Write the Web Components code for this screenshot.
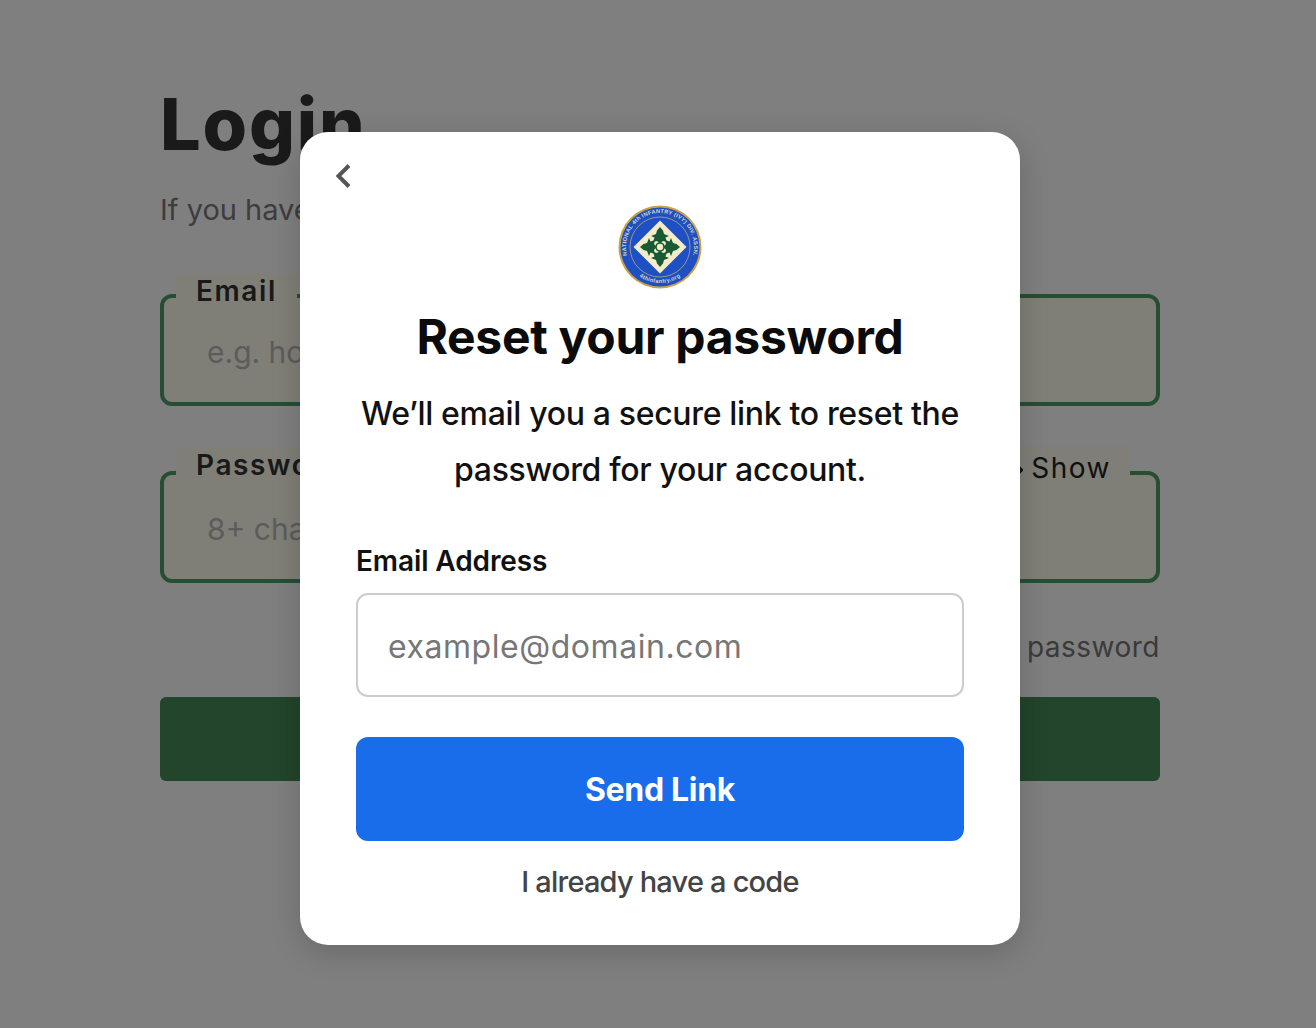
<!DOCTYPE html>
<html lang="en">
<head>
<meta charset="utf-8">
<title>Login</title>
<style>
  html, body { margin: 0; height: 100%; background: #fff; font-family: Inter, "Liberation Sans", sans-serif; overflow: hidden; }
</style>
</head>
<body>
<login-page>
  <text-field label="Email" placeholder="e.g. hooah" style="--label-top:-24px"></text-field>
  <text-field label="Password" placeholder="8+ characters" style="--label-top:-27px">
    <span slot="action"><svg width="30" height="22" viewBox="0 0 30 22" fill="none" stroke="#222" stroke-width="2.4" style="vertical-align:-3px;margin-right:8px"><path d="M2 11 C8 2 22 2 29 11 C22 20 8 20 2 11 Z"/><circle cx="15" cy="11" r="4.5"/></svg>Show</span>
  </text-field>
</login-page>
<modal-backdrop>
  <reset-card></reset-card>
</modal-backdrop>

<script>
// Campo do login com a legenda por cima da borda
class TextField extends HTMLElement {
  constructor() {
    super();
    this.attachShadow({mode: 'open'});
    this.shadowRoot.innerHTML = `
      <style>
        :host { display: block; position: relative; height: 112px; box-sizing: border-box;
                border: 4px solid #4e9a66; border-radius: 12px; background: #fefef0; }
        .label { position: absolute; left: 12px; top: var(--label-top, -24px); padding: 0 20px; height: 40px; min-width: 80px;
                 background: #fefef0; font-size: 28px; font-weight: 600; line-height: 34px; color: #333; letter-spacing: 1.6px; }
        .action { position: absolute; right: 26px; top: -29px; height: 45px; padding: 0 19px 0 20px; line-height: 44px;
                  background: #fefef0; font-size: 28px; color: #222; letter-spacing: 1.5px; white-space: nowrap; }
        .ph { padding: 35px 43px 0; font-size: 30px; line-height: 38px; color: #b8b8b8; white-space: nowrap; overflow: hidden; }
      </style>
      <div class="label"></div>
      <div class="ph"></div>
      <div class="action"><slot name="action"></slot></div>`;
  }
  connectedCallback() {
    this.shadowRoot.querySelector('.label').textContent = this.getAttribute('label');
    this.shadowRoot.querySelector('.ph').textContent = this.getAttribute('placeholder');
    if (!this.querySelector('[slot=action]')) this.shadowRoot.querySelector('.action').remove();
  }
}

class LoginPage extends HTMLElement {
  constructor() {
    super();
    this.attachShadow({mode: 'open'});
    this.shadowRoot.innerHTML = `
      <style>
        :host { display: block; padding: 82px 156px 0 160px; }
        h1 { margin: 0; font-size: 72px; line-height: 84px; font-weight: 800; color: #343434; letter-spacing: 1.8px; }
        p { margin: 24px 0 0; font-size: 29px; line-height: 40px; color: #7a7a7a; white-space: nowrap; }
        .fields { display: flex; flex-direction: column; gap: 65px; margin-top: 64px; }
        .forgot { margin-top: 45px; text-align: right; font-size: 28px; line-height: 38px; color: #757575; letter-spacing: .5px; }
        button { display: block; width: 100%; height: 84px; margin-top: 31px; border: 0; border-radius: 6px;
                 background: #458a57; color: #fff; font: 600 28px Inter, sans-serif; }
      </style>
      <h1>Login</h1>
      <p>If you have an account,</p>
      <div class="fields"><slot></slot></div>
      <div class="forgot">Forgot password</div>
      <button>Login</button>`;
  }
}

// Fundo escuro sobre a pagina, centraliza o card
class ModalBackdrop extends HTMLElement {
  constructor() {
    super();
    this.attachShadow({mode: 'open'});
    this.shadowRoot.innerHTML = `
      <style>
        :host { position: absolute; inset: 0; display: flex; justify-content: center; align-items: flex-start;
                padding: 132px 0 0 4px; box-sizing: border-box; background: rgba(0,0,0,.5); }
      </style>
      <slot></slot>`;
  }
}

class UnitBadge extends HTMLElement {
  constructor() {
    super();
    this.attachShadow({mode: 'open'});
    const leaf = `<path d="M0-3.5 L-3-6 L-7-5 L-5.5-9.5 L-9-11 L-4-13 L-3-16.5 L0-20 L3-16.5 L4-13 L9-11 L5.5-9.5 L7-5 L3-6 Z" fill="#175a34"/>`;
    this.shadowRoot.innerHTML = `
      <style>
        :host { display: block; width: 84px; height: 84px; }
        svg { display: block; }
        text { font: 700 5.6px "Liberation Sans", sans-serif; fill: #d8d8c0; letter-spacing: .3px; }
      </style>
      <svg width="84" height="84" viewBox="-42 -42 84 84">
        <defs>
          <path id="top" d="M-31.8 12 A34 34 0 1 1 31.8 12"/>
          <path id="bot" d="M-27 24 A36.5 36.5 0 0 0 27 24"/>
        </defs>
        <circle r="41.5" fill="#c9a24a"/>
        <circle r="39.5" fill="#1f4fc4"/>
        <circle r="30" fill="none" stroke="#c9b777" stroke-width=".7"/>
        <text><textPath href="#top" startOffset="50%" text-anchor="middle">NATIONAL 4th INFANTRY (IVY) DIV. ASSN.</textPath></text>
        <text><textPath href="#bot" startOffset="50%" text-anchor="middle">4thinfantry.org</textPath></text>
        <path d="M0-26.5 L26.5 0 L0 26.5 L-26.5 0 Z" fill="#f4ecc8"/>
        <g>${leaf}<g transform="rotate(90)">${leaf}</g><g transform="rotate(180)">${leaf}</g><g transform="rotate(270)">${leaf}</g></g>
        <circle r="4" fill="#f4ecc8" stroke="#175a34" stroke-width="1.6"/>
      </svg>`;
  }
}

class ResetCard extends HTMLElement {
  constructor() {
    super();
    this.attachShadow({mode: 'open'});
    this.shadowRoot.innerHTML = `
      <style>
        :host { display: block; width: 720px; height: 813px; box-sizing: border-box; padding: 32px 56px 0;
                background: #fff; border-radius: 28px; box-shadow: 0 8px 30px rgba(0,0,0,.18); text-align: center; }
        .top { display: flex; height: 41px; }
        .back { width: 24px; height: 24px; margin-left: -23px; }
        unit-badge { margin: 0 auto; }
        h2 { margin: 17px 0 0; font-size: 48px; line-height: 62px; font-weight: 700; color: #0b0b0b; letter-spacing: -.3px; }
        p { margin: 18px 0 0; font-size: 32px; line-height: 56px; font-weight: 500; color: #111; letter-spacing: -.33px; }
        label { display: block; margin-top: 44px; text-align: left; font-size: 28px; line-height: 38px; font-weight: 600; color: #111; letter-spacing: -.1px; }
        .input { height: 104px; margin-top: 13px; box-sizing: border-box; padding: 2px 0 0 30px; border: 2px solid #ccc; border-radius: 12px;
                 display: flex; align-items: center; font-size: 32px; color: #777; text-align: left; letter-spacing: .55px; }
        button { display: block; width: 100%; height: 104px; margin-top: 40px; padding-top: 2px; border: 0; border-radius: 12px; background: #1a6dea;
                 color: #fff; font: 700 32px Inter, sans-serif; letter-spacing: -.3px; }
        .code { margin-top: 21px; font-size: 29px; line-height: 40px; font-weight: 500; color: #444; letter-spacing: -.8px; }
      </style>
      <div class="top">
        <svg class="back" viewBox="0 0 24 24" fill="none" stroke="#555" stroke-width="4"><path d="M16 1.5 L5.5 12 L16 22.5"/></svg>
      </div>
      <unit-badge></unit-badge>
      <h2>Reset your password</h2>
      <p>We’ll email you a secure link to reset the<br>password for your account.</p>
      <label>Email Address</label>
      <div class="input">example@domain.com</div>
      <button>Send Link</button>
      <div class="code">I already have a code</div>`;
  }
}

customElements.define('text-field', TextField);
customElements.define('login-page', LoginPage);
customElements.define('modal-backdrop', ModalBackdrop);
customElements.define('unit-badge', UnitBadge);
customElements.define('reset-card', ResetCard);
</script>
</body>
</html>
